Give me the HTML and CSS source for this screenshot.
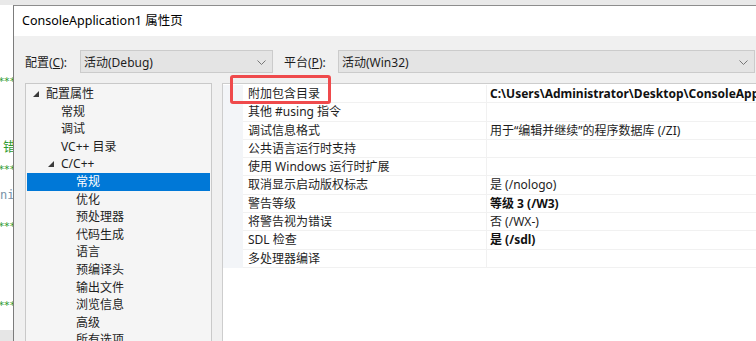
FILE: index.html
```html
<!DOCTYPE html>
<html lang="zh-CN">
<head>
	<meta charset="UTF-8">
	<title>ConsoleApplication1 属性页</title>
	<link rel="stylesheet" href="styles.css">
</head>
<body>
<div class="desk">
	<!-- 后面的代码编辑器，只露出一条边 -->
	<div class="editor">
		<div class="ln cm e1">*****</div>
		<div class="ln cm e2">错误</div>
		<div class="ln cm e3">*****</div>
		<div class="ln code e4">ni'</div>
		<div class="ln cm e5">*****</div>
		<div class="ln cm e6">*****</div>
		<div class="editor-foot"></div>
	</div>

	<div class="dialog">
		<div class="titlebar">ConsoleApplication1 属性页</div>
		<div class="dlg-body">
			<div class="configbar">
				<span class="lbl">配置(<u>C</u>):</span>
				<div class="combo combo-cfg">
					<span>活动(Debug)</span>
					<svg class="chev" width="9" height="5" viewBox="0 0 9 5"><path d="M0.5 0.5 L4.5 4.5 L8.5 0.5" fill="none" stroke="#777" stroke-width="1"/></svg>
				</div>
				<span class="lbl lbl2">平台(<u>P</u>):</span>
				<div class="combo combo-plat">
					<span>活动(Win32)</span>
					<svg class="chev" width="9" height="5" viewBox="0 0 9 5"><path d="M0.5 0.5 L4.5 4.5 L8.5 0.5" fill="none" stroke="#777" stroke-width="1"/></svg>
				</div>
			</div>

			<div class="panes">
				<div class="tree">
					<div class="node lv0"><i class="tri"></i>配置属性</div>
					<div class="node lv1">常规</div>
					<div class="node lv1">调试</div>
					<div class="node lv1">VC++ 目录</div>
					<div class="node lv1t"><i class="tri"></i>C/C++</div>
					<div class="node lv2 sel">常规</div>
					<div class="node lv2">优化</div>
					<div class="node lv2">预处理器</div>
					<div class="node lv2">代码生成</div>
					<div class="node lv2">语言</div>
					<div class="node lv2">预编译头</div>
					<div class="node lv2">输出文件</div>
					<div class="node lv2">浏览信息</div>
					<div class="node lv2">高级</div>
					<div class="node lv2">所有选项</div>
				</div>

				<div class="props">
					<div class="grid">
						<div class="row"><div class="gut"></div><div class="name">附加包含目录</div><div class="val b">C:\Users\Administrator\Desktop\ConsoleApplication1\include</div></div>
						<div class="row"><div class="gut"></div><div class="name">其他 #using 指令</div><div class="val"></div></div>
						<div class="row"><div class="gut"></div><div class="name">调试信息格式</div><div class="val">用于“编辑并继续”的程序数据库 (/ZI)</div></div>
						<div class="row"><div class="gut"></div><div class="name">公共语言运行时支持</div><div class="val"></div></div>
						<div class="row"><div class="gut"></div><div class="name">使用 Windows 运行时扩展</div><div class="val"></div></div>
						<div class="row"><div class="gut"></div><div class="name">取消显示启动版权标志</div><div class="val">是 (/nologo)</div></div>
						<div class="row"><div class="gut"></div><div class="name">警告等级</div><div class="val b">等级 3 (/W3)</div></div>
						<div class="row"><div class="gut"></div><div class="name">将警告视为错误</div><div class="val">否 (/WX-)</div></div>
						<div class="row"><div class="gut"></div><div class="name">SDL 检查</div><div class="val b">是 (/sdl)</div></div>
						<div class="row"><div class="gut"></div><div class="name">多处理器编译</div><div class="val"></div></div>
					</div>
					<div class="mark"></div>
				</div>
			</div>
		</div>
	</div>
</div>
</body>
</html>
```

FILE: styles.css
```css
html,body{margin:0;padding:0}
body{width:756px;height:341px;overflow:hidden;background:#e9e9e9;font-family:"Noto Sans","Noto Sans CJK SC",sans-serif;font-size:12px;color:#1e1e1e}

.desk{display:flex;height:336px;padding-top:5px}

/* editor behind */
.editor{width:13px;flex:none;background:#fff;overflow:hidden;display:flex;flex-direction:column}
.ln{height:16px;line-height:16px;white-space:nowrap;font-size:11px}
.cm{color:#2e9a2e;font-family:"DejaVu Sans Mono",monospace;letter-spacing:-1px;margin-left:-2px}
.code{color:#7a93a8;font-family:"DejaVu Sans Mono",monospace;font-size:12px}
.e1{margin-top:69px}
.e2{margin-top:48px;margin-left:3px;font-family:"Noto Sans CJK SC",sans-serif;font-size:13px;letter-spacing:0}
.e3{margin-top:8px}
.e4{margin-top:9px}
.e5{margin-top:16px}
.e6{margin-top:63px}
.editor-foot{margin-top:auto;height:11px;background:#e6e6e6}

/* dialog */
.dialog{flex:1;display:flex;flex-direction:column;border-left:1px solid #7c7c7c;border-top:1px solid #8d8d8d;background:#f0f0f0;min-width:0}
.titlebar{height:30px;line-height:29px;padding-left:8px;background:#fff;color:#000;font-size:12.5px;white-space:nowrap}
.dlg-body{flex:1;display:flex;flex-direction:column;min-height:0}

.configbar{display:flex;align-items:center;padding:14px 0 0 11px;height:23px}
.lbl{width:55px;flex:none;white-space:nowrap}
.lbl2{width:54px;margin-left:11px}
.combo{height:21px;border:1px solid #cbcbcb;background:#e4e4e4;display:flex;align-items:center;padding-left:3px;flex:none;position:relative}
.combo-cfg{width:188px}
.combo-plat{width:412px}
.chev{position:absolute;right:6px;top:9px}

.panes{flex:1;display:flex;margin-top:10px;padding-left:11px;min-height:0}

.tree{width:185px;flex:none;border:1px solid #c9c9c9;border-bottom:none;background:#f5f5f5;padding-top:1px}
.node{height:17.6px;line-height:17.6px;margin:0 1px;white-space:nowrap;display:flex;align-items:center}
.lv0{padding-left:6px}
.lv1{padding-left:34px}
.lv1t{padding-left:21px}
.lv2{padding-left:49px}
.sel{background:#0078d7;color:#fff}
.tri{width:0;height:0;border-left:6px solid transparent;border-bottom:6px solid #3a3a3a;margin-right:7px;display:inline-block}

.props{flex:1;margin-left:10px;margin-right:-6px;border:1px solid #cdcdcd;border-bottom:none;background:#fff;position:relative}
.grid{padding-top:1px;overflow:hidden}
.row{display:flex;height:18.3px;line-height:18px;white-space:nowrap}
.gut{width:20px;flex:none;background:#f3f5f8}
.name{width:244px;flex:none;padding-left:5px;border-bottom:1px solid #f1f1f1;border-right:1px solid #f1f1f1;box-sizing:border-box}
.val{flex:1;padding-left:3px;border-bottom:1px solid #f1f1f1;overflow:hidden;box-sizing:border-box}
.b{font-weight:bold;color:#111}

/* red highlight over first row */
.mark{position:absolute;left:7px;top:-9px;width:95px;height:23px;border:3px solid #ef4a4c;border-radius:3px}
```
